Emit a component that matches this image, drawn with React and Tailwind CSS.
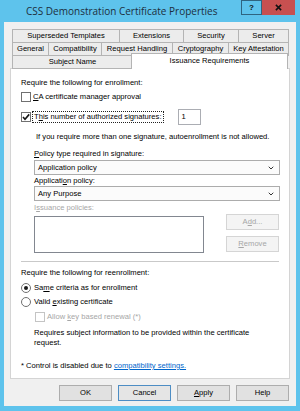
import { ChevronDown } from "lucide-react";

const Check = ({ checked, disabled }) => (
  <span
    className={`relative w-[10px] h-[10px] shrink-0 border bg-white ${
      disabled ? "border-[#c4c4c4]" : "border-[#707070]"
    }`}
  >
    {checked && (
      <svg viewBox="0 0 10 10" className="absolute -left-px -top-px w-[10px] h-[10px]">
        <path d="M2 5 L4 7.2 L8.2 2.4" fill="none" stroke="#151515" strokeWidth="1.6" />
      </svg>
    )}
  </span>
);

const Radio = ({ checked }) => (
  <span className="w-[10px] h-[10px] shrink-0 rounded-full border border-[#707070] bg-white flex items-center justify-center">
    {checked && <span className="w-[4px] h-[4px] rounded-full bg-[#1a1a1a]" />}
  </span>
);

const Tab = ({ w, children }) => (
  <div
    className={`${w} h-[14px] -mr-px border border-[#b4b4b4] bg-[#ececec] flex items-center justify-center whitespace-nowrap`}
  >
    {children}
  </div>
);

const Select = ({ children }) => (
  <div className="h-[15px] w-[246px] border border-[#acacac] bg-[#fbfbfb] flex items-center pl-[3px] pr-[4px]">
    <span className="flex-1">{children}</span>
    <ChevronDown size={8} strokeWidth={3} className="text-[#333]" />
  </div>
);

const Button = ({ children, focus, disabled }) => (
  <div
    className={`w-[53px] h-[16px] border flex items-center justify-center ${
      disabled
        ? "border-[#d5d5d5] bg-[#f4f4f4] text-[#a6a6a6]"
        : focus
        ? "border-[#4d8dc4] bg-[#e5e5e5]"
        : "border-[#adadad] bg-[#e1e1e1]"
    }`}
  >
    {children}
  </div>
);

export default function App() {
  return (
    <div className="w-[300px] h-[411px] bg-[#5ec3ec] flex flex-col font-['Liberation_Sans',Arial,sans-serif] text-[7.6px] leading-[12px] text-black">
      {/* Title bar */}
      <div className="h-[22px] flex shrink-0">
        <div className="flex-1 pl-[26px] pt-[3px] font-['Open_Sans',sans-serif] text-[10px] leading-[16px] text-[#1d2f3c] whitespace-nowrap">
          CSS Demonstration Certificate Properties
        </div>
        <div className="w-[21px] h-[15px] border border-[#2f6480] flex items-center justify-center font-bold text-[8px] text-[#111]">
          ?
        </div>
        <div className="w-[33px] h-[15px] mr-[5px] bg-[#c75050] flex items-center justify-center">
          <svg viewBox="0 0 8 8" className="w-[7px] h-[7px]">
            <path d="M1 1 L7 7 M7 1 L1 7" stroke="#111" strokeWidth="1.8" />
          </svg>
        </div>
      </div>

      {/* Dialog body */}
      <div className="mx-[4px] h-[384px] bg-[#f0f0f0] pt-[7px] flex flex-col">
        {/* Tabs */}
        <div className="ml-[8px]">
          <div className="flex">
            <Tab w="w-[108px]">Superseded Templates</Tab>
            <Tab w="w-[65px]">Extensions</Tab>
            <Tab w="w-[56px]">Security</Tab>
            <Tab w="w-[51px]">Server</Tab>
          </div>
          <div className="flex -mt-px">
            <Tab w="w-[37px]">General</Tab>
            <Tab w="w-[54px]">Compatibility</Tab>
            <Tab w="w-[72px]">Request Handling</Tab>
            <Tab w="w-[57px]">Cryptography</Tab>
            <Tab w="w-[61px]">Key Attestation</Tab>
          </div>
          <div className="flex items-end h-[14px] -mt-px relative z-10">
            <Tab w="w-[121px]">Subject Name</Tab>
            <div className="w-[157px] h-[16px] -ml-px border border-b-0 border-[#b4b4b4] bg-white flex items-start justify-center pt-px">
              Issuance Requirements
            </div>
          </div>
        </div>

        {/* Panel */}
        <div className="ml-[6px] -mt-px w-[280px] h-[311px] bg-white border border-[#d4d4d4] pl-[10px] flex flex-col">
          <div className="mt-[8px]">Require the following for enrollment:</div>
          <div className="mt-[2px] flex items-center gap-[2px]">
            <Check />
            <span>
              <u>C</u>A certificate manager approval
            </span>
          </div>
          <div className="mt-[6px] h-[16px] flex items-center">
            <Check checked />
            <span className="ml-[1px] px-px border border-dotted border-[#222] leading-[10px]">
              T<u>h</u>is number of authorized signatures:
            </span>
            <div className="ml-[14px] w-[23px] h-[16px] border border-[#abadb3] bg-white pl-[3px] flex items-center">
              1
            </div>
          </div>
          <div className="mt-[6px] pl-[15px]">
            If you require more than one signature, autoenrollment is not allowed.
          </div>

          <div className="pl-[13px] flex flex-col">
            <div className="mt-[5px]">
              <u>P</u>olicy type required in signature:
            </div>
            <Select>Application policy</Select>
            <div className="h-[11px] leading-[11px]">
              Applicati<u>o</u>n policy:
            </div>
            <Select>Any Purpose</Select>
            <div className="mt-[1px] text-[#a6a6a6]">
              I<u>s</u>suance policies:
            </div>
            <div className="flex">
              <div className="mt-[2px] w-[170px] h-[37px] border border-[#828790] bg-white" />
              <div className="ml-[22px] flex flex-col gap-[6px]">
                <Button disabled>
                  A<u>d</u>d...
                </Button>
                <Button disabled>
                  <u>R</u>emove
                </Button>
              </div>
            </div>
          </div>

          <div className="mt-[8px] w-[258px] h-px bg-[#c9c9c9]" />
          <div className="mt-[5px]">Require the following for reenrollment:</div>
          <div className="mt-[3px] flex items-center gap-[3px]">
            <Radio checked />
            <span>
              Sa<u>m</u>e criteria as for enrollment
            </span>
          </div>
          <div className="mt-[2px] flex items-center gap-[3px]">
            <Radio />
            <span>
              Valid <u>e</u>xisting certificate
            </span>
          </div>
          <div className="mt-[3px] pl-[14px] flex items-center gap-[2px] text-[#a6a6a6]">
            <Check disabled />
            <span>
              Allow <u>k</u>ey based renewal (*)
            </span>
          </div>
          <div className="mt-[5px] pl-[13px] pr-[20px] leading-[10px]">
            Requires subject information to be provided within the certificate request.
          </div>
          <div className="mt-[12px]">
            * Control is disabled due to{" "}
            <span className="text-[#0066cc] underline">compatibility settings.</span>
          </div>
        </div>

        {/* Buttons */}
        <div className="mt-[6px] pr-[7px] flex justify-end gap-[6px]">
          <Button>OK</Button>
          <Button focus>Cancel</Button>
          <Button>
            <u>A</u>pply
          </Button>
          <Button>Help</Button>
        </div>
      </div>
    </div>
  );
}
